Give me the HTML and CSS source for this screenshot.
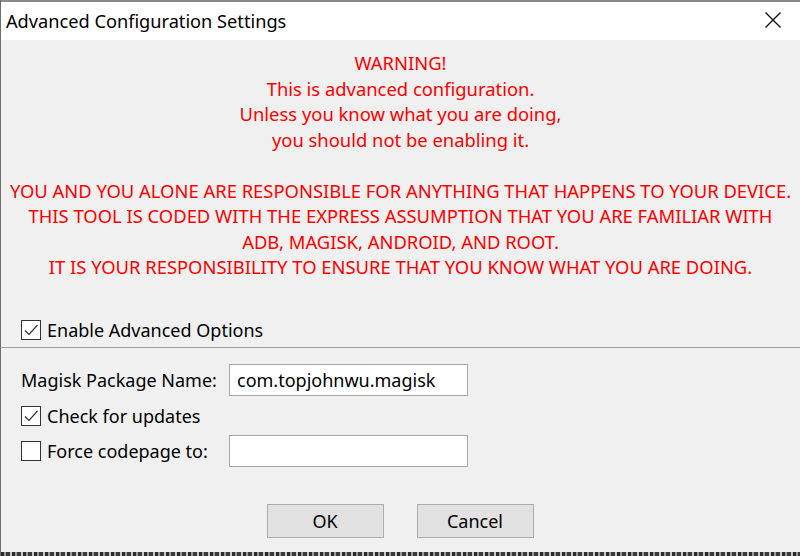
FILE: index.html
```html
<!DOCTYPE html>
<html lang="en">
<head>
    <meta charset="UTF-8">
    <meta name="viewport" content="width=device-width, initial-scale=1.0">
    <title>Advanced Configuration Settings</title>
    <link rel="stylesheet" href="styles.css">
</head>
<body>
    <div class="window">
        <div class="titlebar">
            <span class="title">Advanced Configuration Settings</span>
            <span class="close">
                <svg width="18" height="18" viewBox="0 0 18 18"><path d="M1.5 1.5 L16.5 16.5 M16.5 1.5 L1.5 16.5" stroke="#111" stroke-width="1.4" fill="none"/></svg>
            </span>
        </div>
        <div class="content">
            <div class="warning">
                <div>WARNING!</div>
                <div>This is advanced configuration.</div>
                <div>Unless you know what you are doing,</div>
                <div>you should not be enabling it.</div>
                <div>&nbsp;</div>
                <div>YOU AND YOU ALONE ARE RESPONSIBLE FOR ANYTHING THAT HAPPENS TO YOUR DEVICE.</div>
                <div>THIS TOOL IS CODED WITH THE EXPRESS ASSUMPTION THAT YOU ARE FAMILIAR WITH</div>
                <div>ADB, MAGISK, ANDROID, AND ROOT.</div>
                <div>IT IS YOUR RESPONSIBILITY TO ENSURE THAT YOU KNOW WHAT YOU ARE DOING.</div>
            </div>

            <label class="check-row enable-row">
                <span class="box checked">
                    <svg width="18" height="18" viewBox="0 0 18 18"><path d="M3 9.5 L7 13.5 L15.5 4" stroke="#333" stroke-width="1.2" fill="none"/></svg>
                </span>
                <span>Enable Advanced Options</span>
            </label>

            <div class="separator"></div>

            <div class="options">
                <div class="field-row">
                    <span class="field-label">Magisk Package Name:</span>
                    <div class="textbox">com.topjohnwu.magisk</div>
                </div>
                <label class="check-row updates-row">
                    <span class="box checked">
                        <svg width="18" height="18" viewBox="0 0 18 18"><path d="M3 9.5 L7 13.5 L15.5 4" stroke="#333" stroke-width="1.2" fill="none"/></svg>
                    </span>
                    <span>Check for updates</span>
                </label>
                <div class="field-row">
                    <label class="check-row field-label">
                        <span class="box"></span>
                        <span>Force codepage to:</span>
                    </label>
                    <div class="textbox"></div>
                </div>
            </div>

            <div class="buttons">
                <button class="btn">OK</button>
                <button class="btn">Cancel</button>
            </div>
        </div>
        <div class="desktop"></div>
    </div>
</body>
</html>
```

FILE: styles.css
```css
body {
    margin: 0;
    font-family: "Noto Sans", "Open Sans", sans-serif;
    background-color: #f0f0f0;
    color: #000;
}

.window {
    width: 800px;
    height: 556px;
    display: flex;
    flex-direction: column;
    border-left: 1px solid #6e6e6e;
    box-sizing: border-box;
    overflow: hidden;
}

.titlebar {
    height: 38px;
    background-color: #fff;
    border-top: 2px solid #8a8a8a;
    display: flex;
    align-items: center;
    justify-content: space-between;
    padding: 0 18px 0 5px;
    flex-shrink: 0;
}

.title {
    font-size: 18.2px;
}

.close {
    display: flex;
    margin-top: -2px;
}

.content {
    flex: 1;
    background-color: #f0f0f0;
    font-size: 18px;
}

.warning {
    color: #ff0000;
    text-align: center;
    line-height: 25.5px;
    font-size: 18.4px;
    padding-top: 10px;
}

.check-row {
    display: flex;
    align-items: center;
    gap: 6px;
    height: 24px;
}

.enable-row {
    margin: 38px 0 0 20px;
}

.box {
    width: 18px;
    height: 18px;
    border: 1px solid #333;
    background-color: #fff;
    display: flex;
}

.separator {
    height: 1px;
    background-color: #a0a0a0;
    margin-top: 5px;
}

.options {
    padding: 16px 0 0 20px;
    display: flex;
    flex-direction: column;
}

.field-row {
    display: flex;
    align-items: center;
}

.field-label {
    width: 208px;
}

.textbox {
    width: 223px;
    height: 30px;
    border: 1px solid #a8a8a8;
    background-color: #fff;
    padding: 0 7px;
    line-height: 30px;
}

.updates-row {
    margin: 8px 0 7px;
}

.buttons {
    display: flex;
    justify-content: center;
    gap: 33px;
    margin-top: 37px;
    padding-right: 1px;
}

.btn {
    width: 117px;
    height: 34px;
    background-color: #e1e1e1;
    border: 1px solid #adadad;
    font-family: "Noto Sans", "Open Sans", sans-serif;
    font-size: 18px;
    color: #000;
}

.desktop {
    height: 4px;
    flex-shrink: 0;
    background: repeating-linear-gradient(90deg, #2a2a2a 0 3px, #9a9a9a 3px 5px, #3a3a3a 5px 9px, #c8c8c8 9px 11px);
}
```
